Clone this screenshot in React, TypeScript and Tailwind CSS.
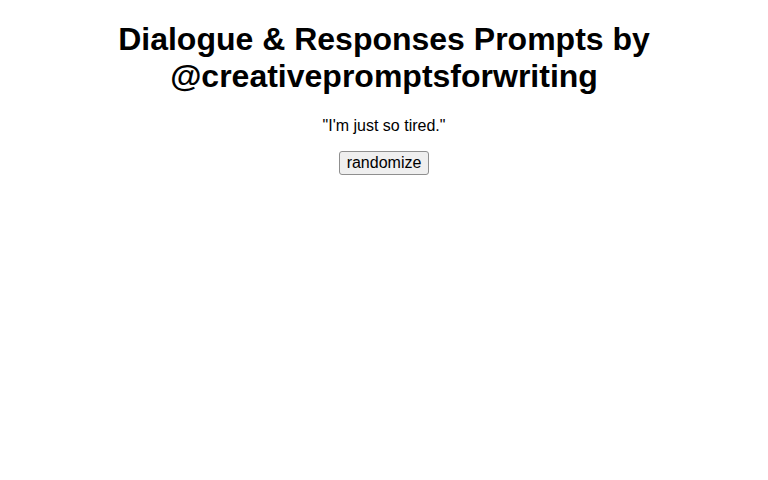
import { useState } from 'react';

const prompts = [
  '"I\'m just so tired."',
  '"You weren\'t supposed to see that."',
  '"Do you trust me?"',
  '"We need to talk."',
  '"I never said I was a good person."',
];

export default function App() {
  const [idx, setIdx] = useState(0);

  const randomize = () => setIdx(Math.floor(Math.random() * prompts.length));

  return (
    <div className="min-h-screen bg-white text-center text-black" style={{ fontFamily: '"Liberation Sans", Arial, sans-serif' }}>
      <h1 className="my-[21.44px] text-[32px] font-bold leading-[37px]">
        Dialogue &amp; Responses Prompts by @creativepromptsforwriting
      </h1>
      <p className="my-4 text-base leading-[18px]">{prompts[idx]}</p>
      <button
        onClick={randomize}
        className="rounded-[3px] border border-[#8f8f8f] bg-[#efefef] px-[7px] py-[2px] text-base leading-[18px] text-black hover:bg-[#e5e5e5]"
      >
        randomize
      </button>
    </div>
  );
}
